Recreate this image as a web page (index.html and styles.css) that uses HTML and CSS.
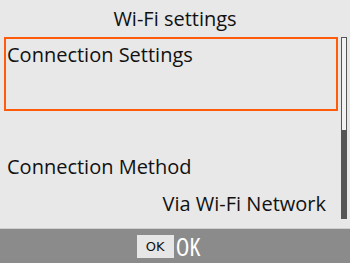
FILE: index.html
```html
<!DOCTYPE html>
<html>
<head>
<meta charset="utf-8">
<link rel="stylesheet" href="styles.css">
</head>
<body>
<div class="screen">
  <div class="title">Wi-Fi settings</div>
  <div class="content">
    <div class="list">
      <div class="item selected">
        <div class="label">Connection Settings</div>
      </div>
      <div class="item second">
        <div class="label">Connection Method</div>
        <div class="value">Via Wi-Fi Network</div>
      </div>
    </div>
    <div class="scrollbar"><div class="thumb"></div></div>
  </div>
  <div class="footer">
    <span class="okkey">OK</span><span class="oklabel">OK</span>
  </div>
</div>
</body>
</html>
```
FILE: styles.css
```css
html, body {
  margin: 0;
  padding: 0;
}
body {
  width: 350px;
  height: 263px;
  overflow: hidden;
  background: #e8e8e8;
  font-family: "Open Sans", "Noto Sans", sans-serif;
  color: #111;
}
.screen {
  display: flex;
  flex-direction: column;
  height: 263px;
}
.title {
  height: 36px;
  box-sizing: border-box;
  padding-top: 1px;
  font-size: 20px;
  line-height: 35px;
  text-align: center;
}
.content {
  display: flex;
  height: 192px;
  padding-top: 1px;
  box-sizing: border-box;
}
.list {
  width: 334px;
  margin-left: 4px;
  display: flex;
  flex-direction: column;
}
.item {
  font-size: 20px;
  line-height: 28px;
}
.selected {
  height: 74px;
  box-sizing: border-box;
  border: 2px solid #ff5b0a;
  padding: 2px 0 0 1px;
}
.second {
  margin-top: 37px;
  padding: 5px 0 0 3px;
}
.value {
  text-align: right;
  margin-top: 9px;
  padding-right: 12px;
}
.scrollbar {
  width: 6px;
  height: 182px;
  margin-left: 3px;
  box-sizing: border-box;
  border: 1px solid #555;
  background: #f2f2f2;
  display: flex;
  flex-direction: column;
  justify-content: flex-end;
}
.thumb {
  height: 88px;
  background: #555;
}
.footer {
  flex: 1;
  background: #8b8b8b;
  border-top: 1px solid #cfcfcf;
  display: flex;
  align-items: center;
  justify-content: center;
  gap: 2px;
  padding-right: 13px;
}
.okkey {
  width: 37px;
  height: 23px;
  background: #e6e6e6;
  color: #111;
  font-size: 13px;
  line-height: 23px;
  text-align: center;
  font-family: "DejaVu Sans", sans-serif;
}
.oklabel {
  color: #fff;
  font-size: 25px;
  font-stretch: 87.5%;
  line-height: 23px;
}
```
